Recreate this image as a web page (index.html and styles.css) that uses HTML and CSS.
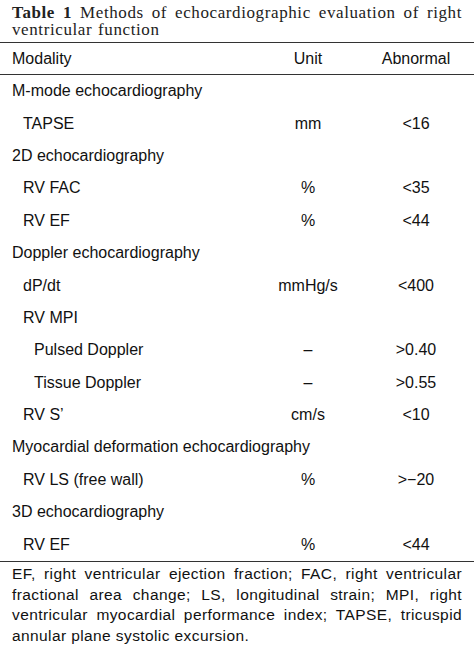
FILE: index.html
```html
<!DOCTYPE html>
<html>
<head>
<meta charset="utf-8">
<link rel="stylesheet" href="styles.css">
</head>
<body>
<div class="page">
  <p class="caption"><b>Table 1</b> Methods of echocardiographic evaluation of right ventricular function</p>
  <table class="tbl">
    <colgroup><col class="w-mod"><col class="w-unit"><col class="w-abn"></colgroup>
    <thead>
      <tr><th class="c-mod">Modality</th><th class="c-unit">Unit</th><th class="c-abn">Abnormal</th></tr>
    </thead>
    <tbody>
      <tr><td class="l1">M-mode echocardiography</td><td></td><td></td></tr>
      <tr><td class="l2">TAPSE</td><td class="c-unit">mm</td><td class="c-abn">&lt;16</td></tr>
      <tr><td class="l1">2D echocardiography</td><td></td><td></td></tr>
      <tr><td class="l2">RV FAC</td><td class="c-unit">%</td><td class="c-abn">&lt;35</td></tr>
      <tr><td class="l2">RV EF</td><td class="c-unit">%</td><td class="c-abn">&lt;44</td></tr>
      <tr><td class="l1">Doppler echocardiography</td><td></td><td></td></tr>
      <tr><td class="l2">dP/dt</td><td class="c-unit">mmHg/s</td><td class="c-abn">&lt;400</td></tr>
      <tr><td class="l2">RV MPI</td><td></td><td></td></tr>
      <tr><td class="l3">Pulsed Doppler</td><td class="c-unit">–</td><td class="c-abn">&gt;0.40</td></tr>
      <tr><td class="l3">Tissue Doppler</td><td class="c-unit">–</td><td class="c-abn">&gt;0.55</td></tr>
      <tr><td class="l2">RV S’</td><td class="c-unit">cm/s</td><td class="c-abn">&lt;10</td></tr>
      <tr><td class="l1">Myocardial deformation echocardiography</td><td></td><td></td></tr>
      <tr><td class="l2">RV LS (free wall)</td><td class="c-unit">%</td><td class="c-abn">&gt;−20</td></tr>
      <tr><td class="l1">3D echocardiography</td><td></td><td></td></tr>
      <tr><td class="l2">RV EF</td><td class="c-unit">%</td><td class="c-abn">&lt;44</td></tr>
    </tbody>
  </table>
  <p class="note">EF, right ventricular ejection fraction; FAC, right ventricular fractional area change; LS, longitudinal strain; MPI, right ventricular myocardial performance index; TAPSE, tricuspid annular plane systolic excursion.</p>
</div>
</body>
</html>
```

FILE: styles.css
```css
html, body {
  margin: 0;
  padding: 0;
  background: #fff;
}
.page {
  width: 474px;
  color: #111;
}
.caption {
  margin: 0;
  padding: 5px 12px 0 12px;
  font-family: "Liberation Serif", "DejaVu Serif", serif;
  font-size: 17px;
  line-height: 16.5px;
  letter-spacing: 0.6px;
  word-spacing: 1px;
  text-align: justify;
  text-align-last: left;
  height: 37px;
  color: #222;
}
.caption b {
  font-weight: bold;
}
.tbl {
  width: 474px;
  table-layout: fixed;
  border-collapse: collapse;
  font-family: "Liberation Sans", Arial, sans-serif;
  font-size: 16px;
  color: #111;
}
.w-mod { width: 258px; }
.w-unit { width: 100px; }
.w-abn { width: 116px; }
.tbl thead tr {
  border-top: 1px solid #333;
  border-bottom: 1px solid #333;
}
.tbl tbody tr:last-child {
  border-bottom: 1px solid #333;
}
.tbl th {
  font-weight: normal;
  height: 31px;
  padding: 0;
}
.tbl td {
  height: 32.4px;
  padding: 0;
  white-space: nowrap;
  overflow: visible;
}
.c-mod, .l1 {
  text-align: left;
  padding-left: 12px !important;
}
.l2 {
  padding-left: 23px !important;
}
.l3 {
  padding-left: 34px !important;
}
.c-unit {
  text-align: center;
}
.c-abn {
  text-align: center;
}
.note {
  margin: 0;
  padding: 2px 12px 0 12px;
  font-family: "Liberation Sans", Arial, sans-serif;
  font-size: 15.5px;
  line-height: 20.7px;
  letter-spacing: 0.4px;
  text-align: justify;
  color: #111;
}
```
